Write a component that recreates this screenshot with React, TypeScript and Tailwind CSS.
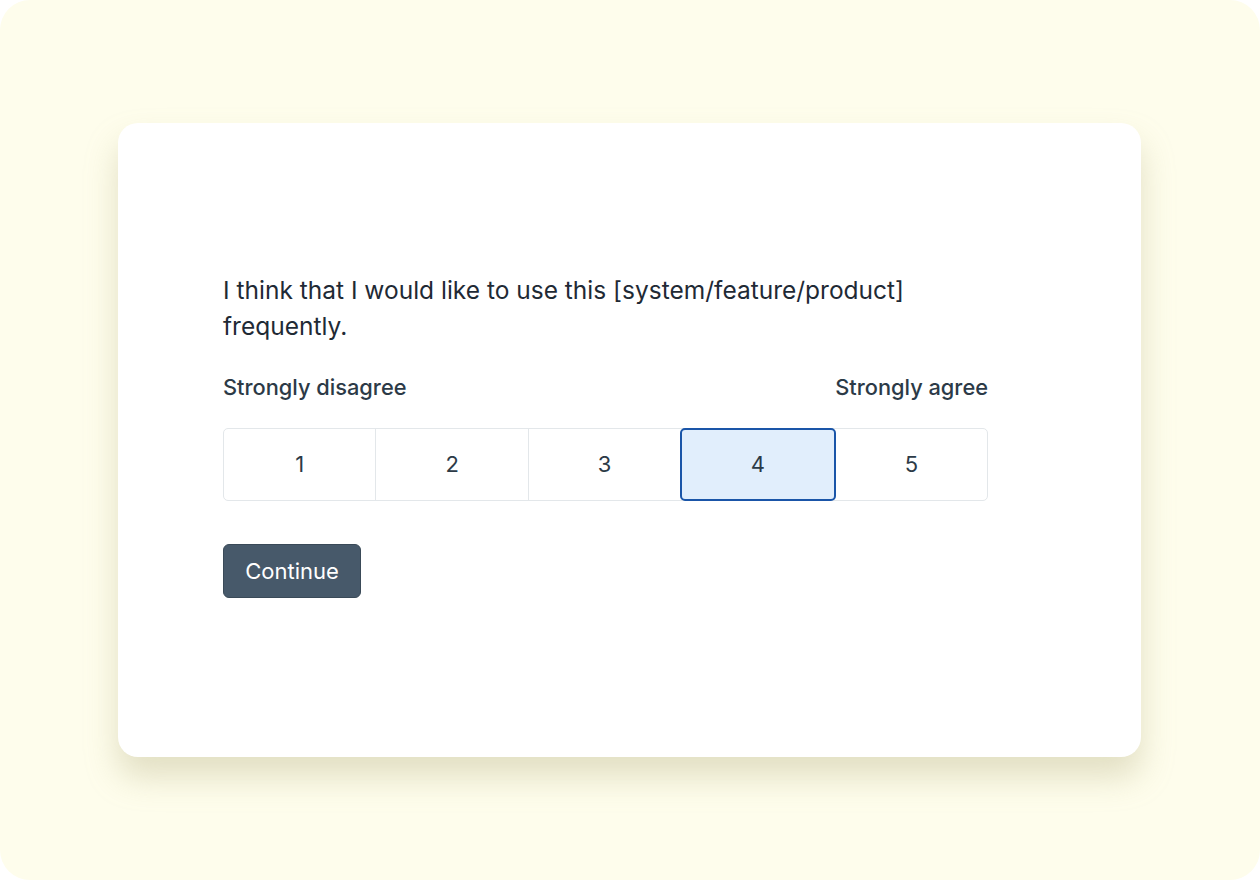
import React, { useState } from 'react';

const options = [1, 2, 3, 4, 5];

const App = () => {
  const [selected, setSelected] = useState(4);

  return (
    <div className="w-[1260px] h-[880px] bg-white" style={{ fontFamily: 'Inter, "Noto Sans", sans-serif' }}>
      <div className="w-full h-full rounded-[30px] bg-[#fefdec] pl-[118px] pt-[123px]">
        <div className="w-[1023px] h-[634px] bg-white rounded-[20px] shadow-[0_20px_32px_rgba(185,180,135,0.4)] pl-[105px] pt-[149px]">
          <div className="w-[765px]">
            <p className="text-[24.5px] leading-[36px] text-[#1f2a35]">
              I think that I would like to use this [system/feature/product] frequently.
            </p>
            <div className="flex justify-between mt-[29px] text-[21.8px] leading-[28px] font-medium text-[#2c3a47]">
              <span>Strongly disagree</span>
              <span>Strongly agree</span>
            </div>
            <div className="flex mt-[27px] h-[73px] border border-[#e3e7ea] rounded-[5px]">
              {options.map((n, idx) => (
                <button
                  key={n}
                  onClick={() => setSelected(n)}
                  className={
                    n === selected
                      ? 'flex-1 -my-px flex items-center justify-center bg-[#e1eefc] border-2 border-[#1a55a8] rounded-[5px] text-[22px] text-[#2c3a47]'
                      : idx > 0 && options[idx - 1] !== selected
                        ? 'flex-1 flex items-center justify-center border-l border-[#e3e7ea] text-[22px] text-[#2c3a47]'
                        : 'flex-1 flex items-center justify-center text-[22px] text-[#2c3a47]'
                  }
                >
                  {n}
                </button>
              ))}
            </div>
            <button className="mt-[43px] w-[138px] h-[54px] rounded-[6px] bg-[#47596a] border border-[#3a4a58] text-white text-[22px]">
              Continue
            </button>
          </div>
        </div>
      </div>
    </div>
  );
};

export default App;
